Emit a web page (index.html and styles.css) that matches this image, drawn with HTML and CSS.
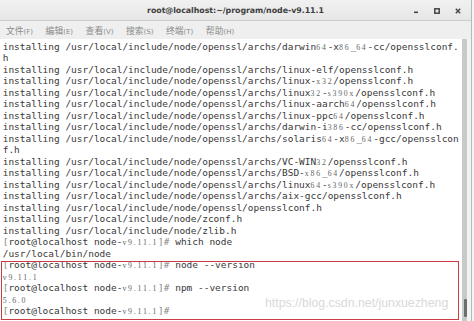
FILE: index.html
```html
<!DOCTYPE html>
<html>
<head>
<meta charset="utf-8">
<link rel="stylesheet" href="styles.css">
</head>
<body>
<div class="window">
  <div class="titlebar">
    <div></div>
    <div class="title">root@localhost:~/program/node-v9.11.1</div>
    <div class="controls">
      <svg width="8" height="8" viewBox="0 0 8 8"><rect x="2" y="4.5" width="4" height="1.6" fill="#444"/></svg>
      <svg width="8" height="8" viewBox="0 0 8 8"><rect x="1.8" y="1.8" width="4.4" height="4.4" fill="none" stroke="#444" stroke-width="1.5"/></svg>
      <svg width="8" height="8" viewBox="0 0 8 8"><path d="M1.8 1.8L6.2 6.2M6.2 1.8L1.8 6.2" stroke="#444" stroke-width="1.4"/></svg>
    </div>
  </div>
  <div class="menubar">
    <span>文件<small>(F)</small></span>
    <span>编辑<small>(E)</small></span>
    <span>查看<small>(V)</small></span>
    <span>搜索<small>(S)</small></span>
    <span>终端<small>(T)</small></span>
    <span>帮助<small>(H)</small></span>
  </div>
  <div class="term">
    <div class="text">
<div class="ln">installing /usr/local/include/node/openssl/archs/darwin<i class="n">64</i>-x<i class="n">86</i>_<i class="n">64</i>-cc/opensslconf.</div>
<div class="ln">h</div>
<div class="ln">installing /usr/local/include/node/openssl/archs/linux-elf/opensslconf.h</div>
<div class="ln">installing /usr/local/include/node/openssl/archs/linux-<i class="n">x32</i>/opensslconf.h</div>
<div class="ln">installing /usr/local/include/node/openssl/archs/linux<i class="n">32</i>-<i class="n">s390x</i>/opensslconf.h</div>
<div class="ln">installing /usr/local/include/node/openssl/archs/linux-aarch<i class="n">64</i>/opensslconf.h</div>
<div class="ln">installing /usr/local/include/node/openssl/archs/linux-ppc<i class="n">64</i>/opensslconf.h</div>
<div class="ln">installing /usr/local/include/node/openssl/archs/darwin-i<i class="n">386</i>-cc/opensslconf.h</div>
<div class="ln">installing /usr/local/include/node/openssl/archs/solaris<i class="n">64</i>-x<i class="n">86</i>_<i class="n">64</i>-gcc/opensslcon</div>
<div class="ln">f.h</div>
<div class="ln">installing /usr/local/include/node/openssl/archs/VC-WIN<i class="n">32</i>/opensslconf.h</div>
<div class="ln">installing /usr/local/include/node/openssl/archs/BSD-<i class="n">x86</i>_<i class="n">64</i>/opensslconf.h</div>
<div class="ln">installing /usr/local/include/node/openssl/archs/linux<i class="n">64</i>-<i class="n">s390x</i>/opensslconf.h</div>
<div class="ln">installing /usr/local/include/node/openssl/archs/aix-gcc/opensslconf.h</div>
<div class="ln">installing /usr/local/include/node/openssl/opensslconf.h</div>
<div class="ln">installing /usr/local/include/node/zconf.h</div>
<div class="ln">installing /usr/local/include/node/zlib.h</div>
<div class="ln"><b class="br">[</b>root@localhost node-<i class="n">v9.11.1</i><b class="br">]#</b> which node</div>
<div class="ln">/usr/local/bin/node</div>
<div class="ln"><b class="br">[</b>root@localhost node-<i class="n">v9.11.1</i><b class="br">]#</b> node --version</div>
<div class="ln"><i class="n">v9.11.1</i></div>
<div class="ln"><b class="br">[</b>root@localhost node-<i class="n">v9.11.1</i><b class="br">]#</b> npm --version</div>
<div class="ln"><i class="n">5.6.0</i></div>
<div class="ln"><b class="br">[</b>root@localhost node-<i class="n">v9.11.1</i><b class="br">]#</b> </div>
      <div class="highlight"></div>
      <div class="watermark">https://blog.csdn.net/junxuezheng</div>
    </div>
    <div class="scrollbar"><div class="thumb"></div></div>
  </div>
</div>
</body>
</html>
```

FILE: styles.css
```css
html, body {
  margin: 0;
  padding: 0;
  background: #f4f4f4;
}
.window {
  width: 471px;
  height: 321px;
  display: flex;
  flex-direction: column;
  border-right: 1px solid #b9b9b9;
  background: #fff;
  overflow: hidden;
}
.titlebar {
  height: 21px;
  flex: none;
  display: grid;
  grid-template-columns: 1fr auto 1fr;
  align-items: center;
  background: linear-gradient(#f1f1f1, #e7e7e7);
  border-bottom: 1px solid #cdcdcd;
  box-sizing: border-box;
}
.title {
  font-family: "DejaVu Sans", sans-serif;
  font-size: 7.9px;
  font-weight: bold;
  color: #404040;
  padding-top: 1px;
  letter-spacing: -0.05px;
}
.controls {
  display: flex;
  justify-content: flex-end;
  gap: 13px;
  padding-right: 9px;
  padding-top: 2px;
}
.controls svg { display: block; }
.menubar {
  height: 18px;
  flex: none;
  display: flex;
  align-items: center;
  gap: 12.5px;
  padding-left: 6px;
  background: #efefef;
  font-family: "Noto Sans CJK SC", sans-serif;
  font-size: 8.8px;
  color: #8a8a8a;
  box-sizing: border-box;
}
.menubar small {
  font-family: "DejaVu Sans", sans-serif;
  font-size: 7px;
}
.term {
  flex: 1;
  display: flex;
  min-height: 0;
}
.text {
  position: relative;
  flex: 1;
  padding: 1.8px 0 0 2.7px;
  font-family: "DejaVu Sans Mono", monospace;
  font-size: 9.47px;
  line-height: 11.5px;
  color: #383838;
}
.ln {
  white-space: pre;
  height: 11.5px;
}
.n {
  font-style: normal;
  font-family: "Liberation Serif", serif;
  font-size: 7.8px;
  letter-spacing: 1.8px;
  color: #666;
}
.br {
  font-weight: normal;
  color: #888;
}
.highlight {
  position: absolute;
  left: 1px;
  top: 221.5px;
  width: 458px;
  height: 59px;
  border: 1.5px solid #cf3b43;
  box-sizing: border-box;
}
.watermark {
  position: absolute;
  left: 265px;
  top: 259px;
  font-family: "Liberation Sans", sans-serif;
  font-size: 12.3px;
  color: #d9d9d9;
  white-space: nowrap;
}
.scrollbar {
  width: 9px;
  flex: none;
  display: flex;
  flex-direction: column;
  justify-content: flex-end;
  padding-bottom: 4px;
  box-sizing: border-box;
  background: linear-gradient(to right, #c9c9c9 0, #c9c9c9 5px, #f3f3f3 5px);
  position: relative;
  z-index: 1;
}
.thumb {
  width: 3px;
  height: 18px;
  margin-left: 2px;
  background: #6e6e6e;
  border-radius: 1px;
}
```
